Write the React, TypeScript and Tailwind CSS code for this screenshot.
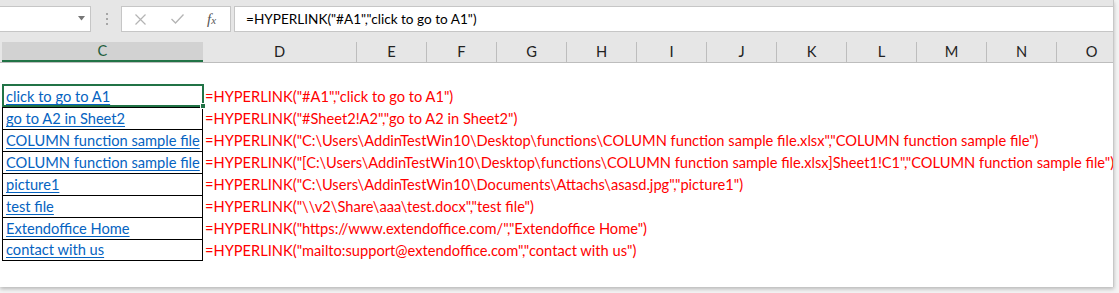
import React from "react";

type Row = { link: string; formula: string };

const rows: Row[] = [
  { link: "click to go to A1", formula: '=HYPERLINK("#A1","click to go to A1")' },
  { link: "go to A2 in Sheet2", formula: '=HYPERLINK("#Sheet2!A2","go to A2 in Sheet2")' },
  {
    link: "COLUMN function sample file",
    formula: String.raw`=HYPERLINK("C:\Users\AddinTestWin10\Desktop\functions\COLUMN function sample file.xlsx","COLUMN function sample file")`,
  },
  {
    link: "COLUMN function sample file",
    formula: String.raw`=HYPERLINK("[C:\Users\AddinTestWin10\Desktop\functions\COLUMN function sample file.xlsx]Sheet1!C1","COLUMN function sample file")`,
  },
  {
    link: "picture1",
    formula: String.raw`=HYPERLINK("C:\Users\AddinTestWin10\Documents\Attachs\asasd.jpg","picture1")`,
  },
  { link: "test file", formula: String.raw`=HYPERLINK("\\v2\Share\aaa\test.docx","test file")` },
  { link: "Extendoffice Home", formula: '=HYPERLINK("https://www.extendoffice.com/","Extendoffice Home")' },
  { link: "contact with us", formula: '=HYPERLINK("mailto:support@extendoffice.com","contact with us")' },
];

const otherCols = ["E", "F", "G", "H", "I", "J", "K", "L", "M", "N", "O"];

function Toolbar() {
  return (
    <div className="flex h-[42px] shrink-0 items-start bg-[#e6e6e6] pt-[6px]">
      {/* name box */}
      <div className="relative ml-[-1px] h-[26px] w-[92px] border border-[#c6c6c6] bg-white">
        <svg className="absolute left-[78px] top-[9px]" width="7" height="5" viewBox="0 0 7 5">
          <path d="M0 0 L7 0 L3.5 4.5 Z" fill="#767676" />
        </svg>
      </div>
      <div className="ml-[15px] mt-[7px] flex flex-col gap-[3px]">
        <span className="h-[2px] w-[2px] bg-[#a6a6a6]" />
        <span className="h-[2px] w-[2px] bg-[#a6a6a6]" />
        <span className="h-[2px] w-[2px] bg-[#a6a6a6]" />
      </div>
      {/* cancel / enter / fx */}
      <div className="ml-[13px] flex h-[26px] w-[110px] items-center border border-[#c6c6c6] bg-white">
        <svg className="ml-[13px]" width="11" height="11" viewBox="0 0 11 11">
          <path d="M0.5 0.5 L10.5 10.5 M10.5 0.5 L0.5 10.5" stroke="#b4b4b4" strokeWidth="1.2" />
        </svg>
        <svg className="ml-[25px]" width="13" height="10" viewBox="0 0 13 10">
          <path d="M0.5 5 L4.5 9 L12.5 0.5" stroke="#b4b4b4" strokeWidth="1.3" fill="none" />
        </svg>
        <span className="ml-[23px] font-['Liberation_Serif',serif] text-[15px] italic leading-none text-[#555]">
          f<span className="text-[11px]">x</span>
        </span>
      </div>
      {/* formula box */}
      <div className="ml-[3px] flex h-[26px] flex-1 items-center border border-r-0 border-[#c6c6c6] bg-white pl-[11px] text-[13.6px] text-black">
        {rows[0].formula}
      </div>
    </div>
  );
}

function HeaderRow() {
  return (
    <div className="flex h-[21px] shrink-0 border-b border-[#bdbdbd] bg-[#e6e6e6] text-[14.65px] leading-none text-[#222]">
      <div className="w-[2px] shrink-0" />
      <div className="flex w-[201px] shrink-0 items-center justify-center border-b-2 border-[#217346] bg-[#d2d2d2] text-[#1e5e3c]">
        C
      </div>
      <div className="flex w-[154px] shrink-0 items-center justify-center border-r border-[#bdbdbd]">D</div>
      {otherCols.map((c) => (
        <div key={c} className="flex w-[70px] shrink-0 items-center justify-center border-r border-[#bdbdbd]">
          {c}
        </div>
      ))}
    </div>
  );
}

export default function App() {
  return (
    <div className="h-[293px] w-[1119px] overflow-hidden bg-[#f4f4f4] font-['Lato',sans-serif]">
      <div className="relative flex h-[287px] w-[1114px] flex-col overflow-hidden border-r border-[#c8c8c8] bg-white shadow-[0_2px_4px_rgba(0,0,0,0.25)]">
        <Toolbar />
        <HeaderRow />
        <div className="h-[22px] shrink-0" />
        <div className="flex flex-col pl-[2px]">
          {rows.map((r, i) => (
            <div key={i} className="flex h-[22px] shrink-0">
              <div
                className={
                  "flex w-[201px] shrink-0 items-end border-l border-r border-t border-black pb-[2px] pl-[3px] text-[14.65px] leading-none text-[#0563c1] underline decoration-1 underline-offset-2" +
                  (i === rows.length - 1 ? " border-b" : "")
                }
              >
                {r.link}
              </div>
              <div className="flex items-end whitespace-nowrap pb-[2px] pl-[2px] text-[14.65px] leading-none text-[#ff0000]">
                {r.formula}
              </div>
            </div>
          ))}
        </div>
        {/* active cell selection */}
        <div className="absolute left-[2px] top-[84px] h-[23px] w-[202px] border-2 border-[#217346]" />
        <div className="absolute left-[200px] top-[103px] h-[6px] w-[6px] border border-white bg-[#217346]" />
      </div>
    </div>
  );
}
